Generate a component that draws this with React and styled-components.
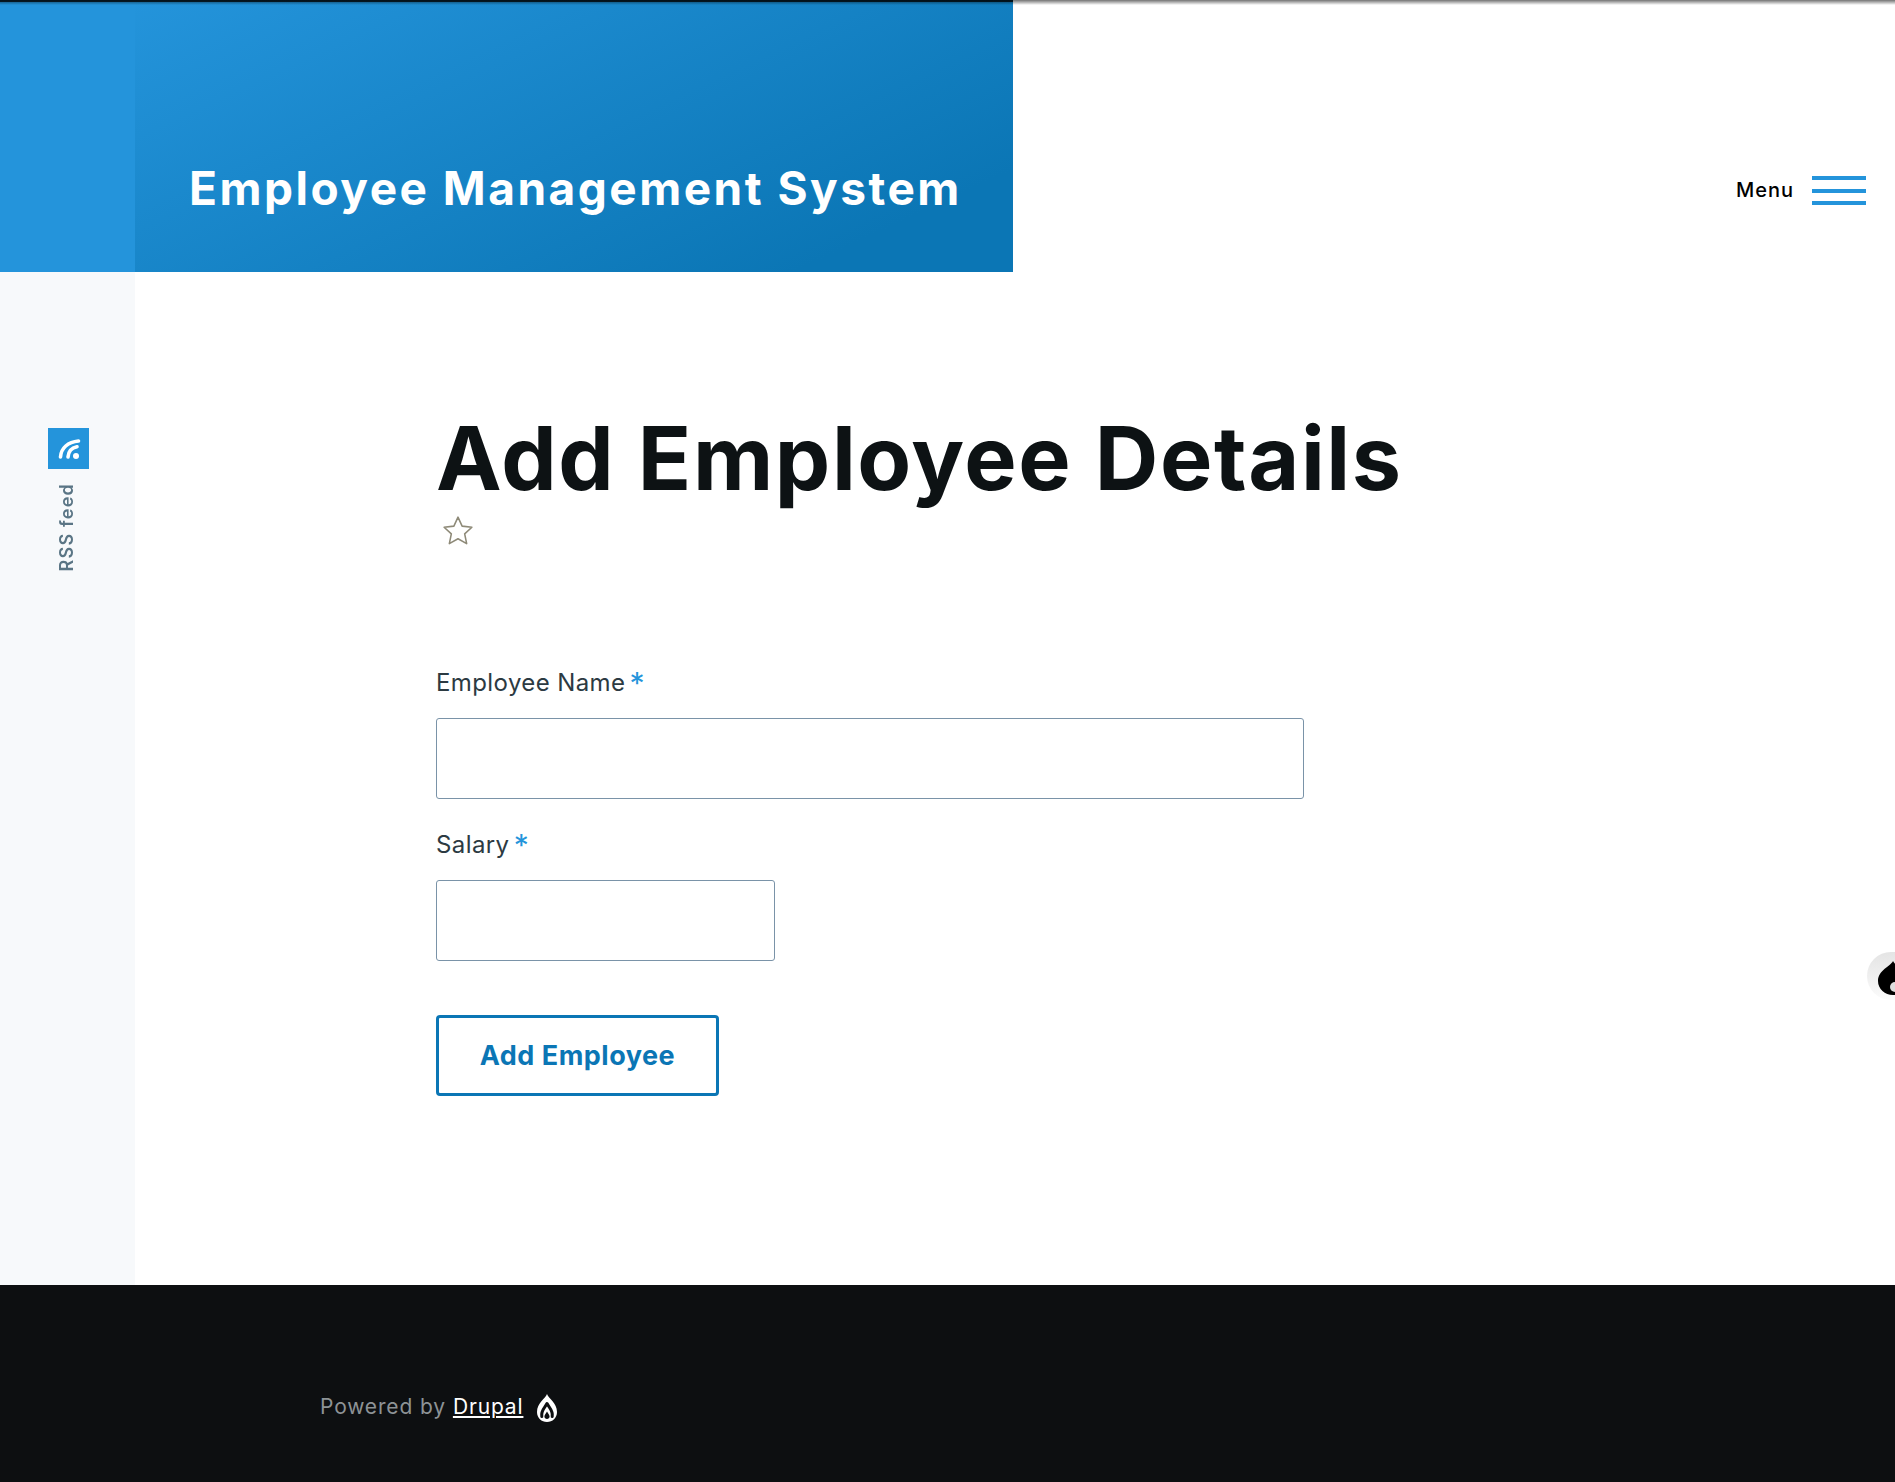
import styled, { createGlobalStyle } from "styled-components"

const GlobalStyle = createGlobalStyle`
html, body {
    margin: 0;
    padding: 0;
    background: #fff;
}
body {
    font-family: "Inter", "Liberation Sans", sans-serif;
    color: #0d1214;
}
* {
    box-sizing: border-box;
}
`

const App = () => {
    return (
        <Page>
            <GlobalStyle />
            <Header>
                <Branding>
                    <BrandEdge />
                    <BrandTitle>
                        <SiteName>Employee Management System</SiteName>
                    </BrandTitle>
                </Branding>
                <MenuToggle>
                    <MenuLabel>Menu</MenuLabel>
                    <MenuBars>
                        <span />
                        <span />
                        <span />
                    </MenuBars>
                </MenuToggle>
            </Header>
            <Middle>
                <Sidebar>
                    <RssLink>
                        <RssBox>
                            <svg width="25" height="25" viewBox="0 0 25 25" fill="none">
                                <path d="M4.5 21C5 12 12 6 22.5 5" stroke="#fff" strokeWidth="3.6" strokeLinecap="round" />
                                <path d="M12 21C12.4 15.5 15.5 11.8 21 10.7" stroke="#fff" strokeWidth="3.6" strokeLinecap="round" />
                                <circle cx="20" cy="20" r="3" fill="#fff" />
                            </svg>
                        </RssBox>
                        <RssText>RSS feed</RssText>
                    </RssLink>
                </Sidebar>
                <Main>
                    <Title>Add Employee Details</Title>
                    <StarButton>
                        <svg width="30" height="30" viewBox="1.5 1.5 27 27" fill="none">
                            <path
                                d="M15 2.5L18.7 10.6L27.5 11.6L21 17.6L22.8 26.4L15 22L7.2 26.4L9 17.6L2.5 11.6L11.3 10.6Z"
                                stroke="#8e8a78"
                                strokeWidth="1.4"
                                strokeLinejoin="round"
                            />
                        </svg>
                    </StarButton>
                    <Form>
                        <Field>
                            <Label>Employee Name <Required>*</Required></Label>
                            <Input type="text" $width="868px" />
                        </Field>
                        <Field>
                            <Label>Salary <Required>*</Required></Label>
                            <Input type="text" $width="339px" />
                        </Field>
                        <Submit type="button">Add Employee</Submit>
                    </Form>
                </Main>
            </Middle>
            <Footer>
                <PoweredBy>
                    Powered by <DrupalLink href="#">Drupal</DrupalLink>
                    <svg width="22" height="30" viewBox="0 0 22 30" fill="none">
                        <path
                            d="M11 1C12.5 5.5 21 10 21 19C21 25 16.5 29 11 29C5.5 29 1 25 1 19C1 10 9.5 5.5 11 1Z"
                            fill="#fff"
                        />
                        <path
                            d="M5.8 23.5C4.6 17.5 9 14.5 11 10.5C13 14.5 17.4 17.5 16.2 23.5"
                            stroke="#0d0f11"
                            strokeWidth="3"
                            strokeLinecap="round"
                            strokeLinejoin="round"
                        />
                        <path d="M11 18.5C12.2 20.5 13.6 22 13.6 23.6C13.6 25 12.4 26 11 26C9.6 26 8.4 25 8.4 23.6C8.4 22 9.8 20.5 11 18.5Z" fill="#0d0f11" />
                    </svg>
                </PoweredBy>
            </Footer>
            <TopShade />
            <Toolbar>
                <svg width="36" height="38" viewBox="0 0 36 38">
                    <path d="M19 3C21 8 34 12 34 23C34 31 27 37 19 37C11 37 4 31 4 23C4 12 17 8 19 3Z" fill="#000" />
                    <circle cx="21" cy="29" r="5" fill="#dedede" />
                </svg>
            </Toolbar>
        </Page>
    )
}

const Page = styled.div`
position: relative;
width: 100%;
height: 1482px;
overflow: hidden;
display: flex;
flex-direction: column;
`

const TopShade = styled.div`
position: absolute;
top: 0;
left: 0;
right: 0;
height: 5px;
background: linear-gradient(rgba(0, 0, 0, 0.55), rgba(0, 0, 0, 0));
`

const Header = styled.header`
display: flex;
justify-content: space-between;
align-items: flex-start;
height: 272px;
flex: none;
`

const Branding = styled.div`
position: relative;
display: flex;
width: 1013px;
height: 100%;

&::before {
    content: "";
    position: absolute;
    top: 0;
    left: 0;
    right: 0;
    height: 2px;
    background: rgba(0, 0, 0, 0.75);
}
`

const BrandEdge = styled.div`
width: 135px;
flex: none;
background: #2494db;
`

const BrandTitle = styled.div`
flex: 1;
display: flex;
align-items: flex-end;
padding: 0 0 56px 54px;
background: linear-gradient(155deg, #2494db 0%, #0b76b5 85%);
`

const SiteName = styled.div`
color: #fff;
font-size: 46px;
line-height: 56px;
font-weight: 700;
letter-spacing: 2.5px;
white-space: nowrap;
`

const MenuToggle = styled.div`
display: flex;
align-items: center;
gap: 18px;
margin-top: 176px;
padding-right: 29px;
`

const MenuLabel = styled.span`
margin-bottom: 2px;
color: #000;
font-size: 20px;
line-height: 22px;
font-weight: 500;
letter-spacing: 1px;
`

const MenuBars = styled.div`
display: flex;
flex-direction: column;
gap: 8.5px;
width: 54px;

span {
    display: block;
    height: 4px;
    background: #2494db;
}
`

const Middle = styled.div`
display: flex;
height: 1013px;
flex: none;
`

const Sidebar = styled.aside`
width: 135px;
flex: none;
padding: 156px 0 0 48px;
background: #f7f9fb;
`

const RssLink = styled.div`
display: flex;
flex-direction: column;
align-items: center;
width: 41px;
gap: 14px;
`

const RssBox = styled.div`
display: flex;
align-items: center;
justify-content: center;
width: 41px;
height: 41px;
background: #2494db;
`

const RssText = styled.span`
writing-mode: vertical-rl;
transform: rotate(180deg);
margin-right: 3px;
color: #5a7585;
font-size: 18px;
line-height: 18px;
font-weight: 600;
letter-spacing: 1.2px;
white-space: nowrap;
`

const Main = styled.main`
flex: 1;
padding: 134px 0 0 301px;
`

const Title = styled.h1`
margin: 0;
color: #0d1214;
font-size: 88px;
line-height: 105px;
font-weight: 700;
letter-spacing: 1.6px;
white-space: nowrap;
`

const StarButton = styled.div`
display: block;
width: 30px;
height: 30px;
margin: 5px 0 0 7px;
`

const Form = styled.form`
display: flex;
flex-direction: column;
align-items: flex-start;
margin-top: 121px;
`

const Field = styled.div`
display: flex;
flex-direction: column;
margin-bottom: 30px;
`

const Label = styled.label`
color: #2c3a42;
font-size: 24px;
line-height: 32px;
font-weight: 400;
letter-spacing: 0.4px;
margin-bottom: 19px;
`

const Required = styled.span`
margin-left: -3px;
color: #2494db;
font-size: 30px;
line-height: 20px;
vertical-align: -3px;
`

const Input = styled.input`
width: ${(props) => props.$width};
height: 81px;
border: 1px solid #7a93a8;
border-radius: 3px;
background: #fff;
`

const Submit = styled.button`
width: 283px;
height: 81px;
margin-top: 24px;
border: 3px solid #0b76b5;
border-radius: 4px;
background: #fff;
color: #0b76b5;
font-family: inherit;
font-size: 27px;
font-weight: 700;
letter-spacing: 0.5px;
`

const Footer = styled.footer`
flex: 1;
padding: 105px 0 0 320px;
background: #0d0f11;
`

const PoweredBy = styled.div`
display: flex;
align-items: center;
gap: 7px;
color: #8d9396;
font-size: 21px;
line-height: 28px;
letter-spacing: 0.85px;

svg {
    margin: 3px 0 0 6px;
}
`

const DrupalLink = styled.a`
color: #fff;
text-decoration: underline;
`

const Toolbar = styled.div`
position: absolute;
top: 952px;
left: 1867px;
width: 60px;
height: 48px;
padding: 6px 0 0 7px;
border-radius: 24px;
background: linear-gradient(#e4e4e4, #fbfbfb);

svg {
    filter: blur(0.5px);
}
`

export default App
